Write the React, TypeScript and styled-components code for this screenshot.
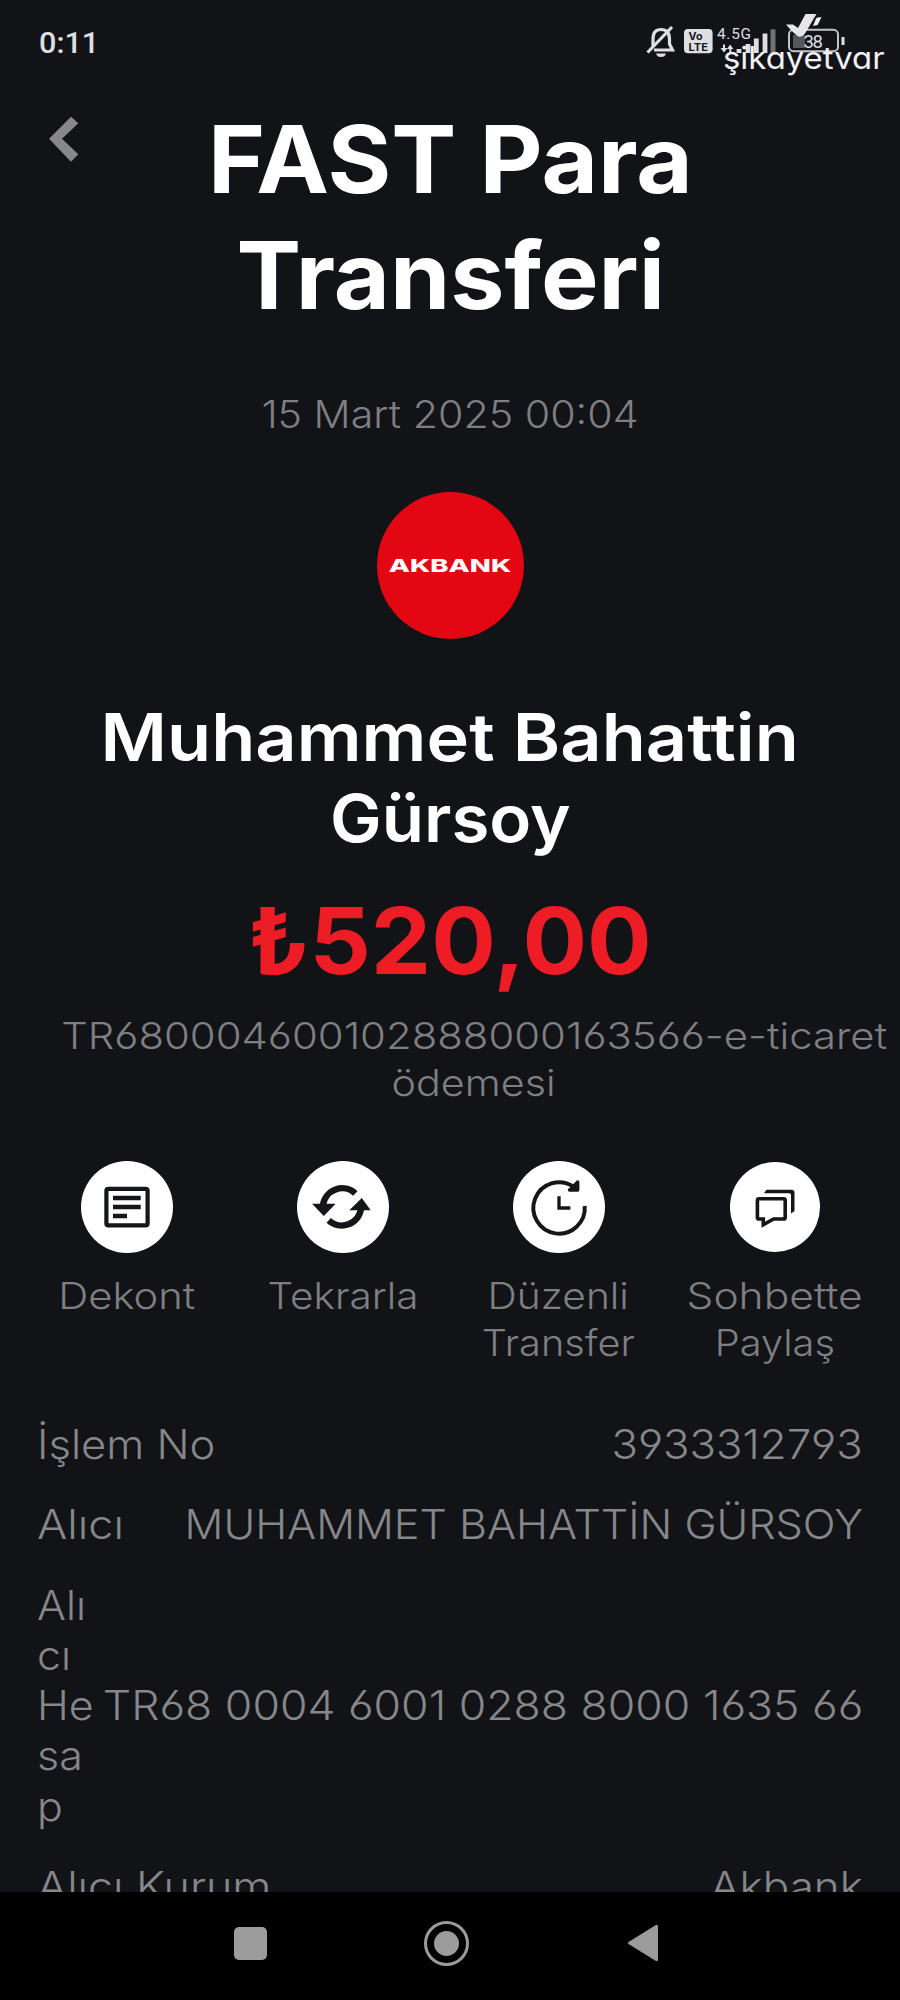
import React from 'react';
import styled, { createGlobalStyle } from 'styled-components';

const GlobalStyle = createGlobalStyle`
  * { box-sizing: border-box; }
  body { margin: 0; background: #121317; }
`;

const muted = '#7e7f83';

/* One line of text, widened from its own left, centre or right edge */
const Line = styled.span<{ $stretch?: number; $from?: 'left' | 'center' | 'right' }>`
  display: block;
  white-space: nowrap;
  transform: scaleX(${(p) => p.$stretch ?? 1});
  transform-origin: ${(p) => p.$from ?? 'center'} center;
`;

const Screen = styled.div`
  width: 900px;
  height: 2000px;
  display: flex;
  flex-direction: column;
  overflow: hidden;
  background: #121317;
  color: #fff;
  font-family: Inter, 'Liberation Sans', sans-serif;
  font-feature-settings: 'cv03', 'cv04';
`;

const StatusBar = styled.div`
  position: relative;
  flex: none;
  height: 101px;
  padding: 25px 26px 0 39px;
  display: flex;
  align-items: flex-start;
  justify-content: space-between;
  font-family: Roboto, sans-serif;
  color: #dfdfe3;
`;

const Clock = styled.div`
  font-size: 30px;
  line-height: 36px;
  font-weight: 500;
`;

const StatusIcons = styled.div`
  display: flex;
  margin-right: 27px;
`;

const Watermark = styled.div`
  position: absolute;
  left: 723px;
  top: 12px;
  width: 165px;
  color: #f2f2f4;
  font-family: Inter, sans-serif;
  font-size: 30.6px;
  font-weight: 400;
  line-height: 36px;
  font-feature-settings: 'cv11';
`;

const WatermarkMark = styled.svg`
  display: block;
  margin-left: 62px;
`;

const WatermarkName = styled.div`
  margin-top: 0;
`;

const Content = styled.main`
  flex: 1;
  min-height: 0;
  overflow: hidden;
`;

const Header = styled.header`
  display: grid;
  grid-template-columns: 110px 1fr 109px;
`;

const BackButton = styled.button`
  height: 76px;
  padding: 0 0 0 49px;
  border: 0;
  background: none;
  display: flex;
  align-items: center;
`;

const Title = styled.h1`
  margin: 0;
  display: flex;
  flex-direction: column;
  align-items: center;
  font-size: 93px;
  line-height: 116px;
  font-weight: 700;
`;

const Timestamp = styled.div`
  margin-top: 58px;
  display: flex;
  justify-content: center;
  font-size: 38px;
  line-height: 46px;
  font-weight: 330;
  color: ${muted};
`;

const BankBadge = styled.div`
  width: 147px;
  height: 147px;
  margin: 55px auto 0;
  border-radius: 50%;
  background: #e30613;
  display: flex;
  align-items: center;
  justify-content: center;
`;

const BankName = styled.span`
  font-size: 18px;
  line-height: 20px;
  font-weight: 800;
  transform: scaleX(1.53);
`;

const Recipient = styled.h2`
  margin: 58px 0 0;
  display: flex;
  flex-direction: column;
  align-items: center;
  font-size: 65.6px;
  line-height: 81px;
  font-weight: 600;
`;

const Amount = styled.div`
  margin-top: 32px;
  display: flex;
  justify-content: center;
  font-size: 92px;
  line-height: 100px;
  font-weight: 700;
  color: #ee1c25;
`;

const Note = styled.div`
  margin-top: 22px;
  padding-left: 48px;
  display: flex;
  flex-direction: column;
  align-items: center;
  font-size: 37px;
  line-height: 46.5px;
  font-weight: 330;
  color: ${muted};
`;

const Actions = styled.div`
  margin-top: 55px;
  padding: 0 17.4px 0 18.6px;
  display: grid;
  grid-template-columns: repeat(4, 216px);
`;

const Action = styled.div`
  display: flex;
  flex-direction: column;
  align-items: center;
`;

const ActionLabel = styled.div`
  margin-top: 20px;
  display: flex;
  flex-direction: column;
  align-items: center;
  font-size: 37px;
  line-height: 46.5px;
  font-weight: 330;
  color: ${muted};
`;

const Details = styled.dl`
  margin: 54px 37px 0 37px;
  display: flex;
  flex-direction: column;
  gap: 30px;
  font-size: 40.5px;
  line-height: 50.3px;
  font-weight: 330;
  color: #86878a;
`;

const DetailRow = styled.div`
  display: flex;
  align-items: center;
  justify-content: space-between;
`;

const DetailLabel = styled.dt`
  margin: 0;
`;

const DetailValue = styled.dd`
  margin: 0;
`;

const NavBar = styled.nav`
  flex: none;
  height: 108px;
  padding: 0 242px 6px 234px;
  background: #000;
  display: flex;
  align-items: center;
  justify-content: space-between;
`;

const RecentsKey = styled.div`
  width: 33px;
  height: 33px;
  border-radius: 5px;
  background: #9b9b9b;
`;

const HomeKey = styled.div`
  width: 45px;
  height: 45px;
  margin-left: -1px;
  border: 3.5px solid #9b9b9b;
  border-radius: 50%;
  display: flex;
  align-items: center;
  justify-content: center;
  &::after {
    content: '';
    width: 25px;
    height: 25px;
    border-radius: 50%;
    background: #9b9b9b;
  }
`;

const ink = '#15161a';

const ReceiptIcon = () => (
  <svg width="92" height="92" viewBox="0 0 92 92" fill="none" stroke={ink}>
    <circle cx="46" cy="46" r="46" fill="#fff" stroke="none" />
    <rect x="25.4" y="27.8" width="41.2" height="36.6" rx="2" strokeWidth="4.2" />
    <path d="M32 37h27.7M32 46h27.7M32 55h14" strokeWidth="4.6" />
  </svg>
);

const RepeatIcon = () => (
  <svg width="92" height="92" viewBox="0 0 92 92" fill="none" stroke={ink}>
    <circle cx="46" cy="46" r="46" fill="#fff" stroke="none" />
    <path d="M26 44A19.3 19.3 0 0 1 58.3 32.5M64 47.5A19.3 19.3 0 0 1 31.7 59.3" strokeWidth="6.4" />
    <path d="M15 42.7H38.7L26.8 55zM52.3 49.3H73.7L64.8 37z" fill={ink} stroke="none" />
  </svg>
);

const ScheduleIcon = () => (
  <svg width="92" height="92" viewBox="0 0 92 92" fill="none" stroke={ink}>
    <circle cx="46" cy="46" r="46" fill="#fff" stroke="none" />
    <path d="M71.7 45A25.7 25.7 0 1 1 60.5 25.7" strokeWidth="4" />
    <path d="M64.7 21V29H56.5L60.5 25.5z" fill={ink} strokeWidth="3.4" strokeLinejoin="round" />
    <path d="M46 35.3V47H57.4" strokeWidth="3.3" />
  </svg>
);

const ShareChatIcon = () => (
  <svg width="92" height="92" viewBox="-1 -1 92 92" fill="none" stroke={ink}>
    <circle cx="45" cy="45" r="45" fill="#fff" stroke="none" />
    <path d="M29 36.8H53.6Q55.2 36.8 55.2 38.4V55.4Q55.2 57 53.6 57H43.5L33.3 62.7V57H29Q27.4 57 27.4 55.4V38.4Q27.4 36.8 29 36.8z" strokeWidth="3.6" />
    <path d="M34 31.3L36.5 27.7H61.5Q64.5 27.7 64.5 30.7V49L61 51.5V33Q61 31.3 59.3 31.3z" fill={ink} stroke="none" />
  </svg>
);

/* Muted bell, VoLTE badge, network type with signal bars, battery */
const StatusGlyphs = () => (
  <svg width="202" height="40" viewBox="645 25 202 40" fill="none">
    <g stroke="#dfdfe3" strokeWidth="3.2">
      <path d="M653 46V39Q653 29.5 661 29.5Q669.5 29.5 669.5 39V44L672.5 50H654" />
      <path d="M647.5 52.5L672 27" />
    </g>
    <path d="M656 53.5H666Q665 57 661 57T656 53.5z" fill="#dfdfe3" />
    <rect x="684" y="29" width="28.6" height="24.3" rx="4" fill="#dfdfe3" />
    <g fill="#18191d" fontFamily="Inter, sans-serif" fontWeight="700" fontSize="10.5">
      <text x="688.5" y="39.6" textLength="14" lengthAdjust="spacingAndGlyphs">Vo</text>
      <text x="688.5" y="50.7" textLength="19.5" lengthAdjust="spacingAndGlyphs">LTE</text>
    </g>
    <text x="717" y="39" textLength="34" fill="#dfdfe3" fontFamily="Roboto, sans-serif" fontSize="15.4">4.5G</text>
    <path d="M720.5 48L724 52.5L727.5 48zM727 49L730 44.5L733.5 49z" fill="#dfdfe3" />
    <path d="M724 44.5V49M730.3 48V53" stroke="#dfdfe3" strokeWidth="2" />
    <path d="M739 49V53M748 44V53M756.3 38.5V53M765 33.5V53" stroke="#dfdfe3" strokeWidth="4.8" />
    <path d="M773 29.3V53" stroke="#6f7074" strokeWidth="5" />
    <rect x="793" y="35" width="12" height="13" fill="#55565a" />
    <rect x="789" y="29.8" width="49" height="21.4" rx="4.5" stroke="#c4c4c8" strokeWidth="2" />
    <path d="M843 37V45" stroke="#dfdfe3" strokeWidth="3" />
    <text x="803.5" y="48" textLength="19.5" fill="#dfdfe3" fontFamily="Roboto, sans-serif" fontSize="18.5">38</text>
  </svg>
);

const actions = [
  { icon: <ReceiptIcon />, lines: [{ text: 'Dekont', stretch: 1.127 }] },
  { icon: <RepeatIcon />, lines: [{ text: 'Tekrarla', stretch: 1.095 }] },
  { icon: <ScheduleIcon />, lines: [{ text: 'Düzenli', stretch: 1.1 }, { text: 'Transfer', stretch: 1.072 }] },
  { icon: <ShareChatIcon />, lines: [{ text: 'Sohbette', stretch: 1.15 }, { text: 'Paylaş', stretch: 1.075 }] },
];

const details = [
  { label: ['İşlem No'], value: '3933312793', labelStretch: 1.075, valueStretch: 1.08 },
  { label: ['Alıcı'], value: 'MUHAMMET BAHATTİN GÜRSOY', labelStretch: 1.11, valueStretch: 1.065 },
  { label: ['Alı', 'cı', 'He', 'sa', 'p'], value: 'TR68 0004 6001 0288 8000 1635 66', labelStretch: 1.06, valueStretch: 1.1 },
  { label: ['Alıcı Kurum'], value: 'Akbank', labelStretch: 1.105, valueStretch: 1.085 },
];

export default function App() {
  return (
    <>
      <GlobalStyle />
      <Screen>
        <StatusBar>
          <Clock><Line $stretch={1.02} $from="left">0:11</Line></Clock>
          <StatusIcons><StatusGlyphs /></StatusIcons>
          <Watermark>
            <WatermarkMark width="38" height="28" viewBox="785 12 38 28">
              <path d="M786 24.5H793L798 28L805.5 14H816.5L805 33.5Q802 37.5 798.5 36.5Q794 34 786 24.5z" fill="#e6e6e8" />
              <path d="M813 26L816 18.5Q817 17 821.5 17.3L817.5 25z" fill="#f2f2f4" />
            </WatermarkMark>
            <WatermarkName><Line $stretch={1.075} $from="left">şikayetvar</Line></WatermarkName>
          </Watermark>
        </StatusBar>
        <Content>
          <Header>
            <BackButton aria-label="Geri">
              <svg width="30" height="46" viewBox="49 116 30 46">
                <path d="M71 116.7L78.3 123.3L62 138.7L78.3 154.3L71 161.7L49 138.7z" fill="#88888b" />
              </svg>
            </BackButton>
            <Title>
              <Line $stretch={1.048}>FAST Para</Line>
              <Line $stretch={1.041}>Transferi</Line>
            </Title>
          </Header>
          <Timestamp><Line $stretch={1.084}>15 Mart 2025 00:04</Line></Timestamp>
          <BankBadge><BankName>AKBANK</BankName></BankBadge>
          <Recipient>
            <Line $stretch={1.099}>Muhammet Bahattin</Line>
            <Line $stretch={1.053}>Gürsoy</Line>
          </Recipient>
          <Amount><Line $stretch={1.043}>₺520,00</Line></Amount>
          <Note>
            <Line $stretch={1.131}>TR680004600102888000163566-e-ticaret</Line>
            <Line $stretch={1.115}>ödemesi</Line>
          </Note>
          <Actions>
            {actions.map((a) => (
              <Action key={a.lines[0].text}>
                {a.icon}
                <ActionLabel>
                  {a.lines.map((l) => <Line key={l.text} $stretch={l.stretch}>{l.text}</Line>)}
                </ActionLabel>
              </Action>
            ))}
          </Actions>
          <Details>
            {details.map((d) => (
              <DetailRow key={d.value}>
                <DetailLabel>
                  {d.label.map((t) => <Line key={t} $stretch={d.labelStretch} $from="left">{t}</Line>)}
                </DetailLabel>
                <DetailValue><Line $stretch={d.valueStretch} $from="right">{d.value}</Line></DetailValue>
              </DetailRow>
            ))}
          </Details>
        </Content>
        <NavBar>
          <RecentsKey />
          <HomeKey />
          <svg width="31" height="38" viewBox="0 0 31 38">
            <path d="M1.5 18L28.5 1.2Q31 0 31 2.5V35.5Q31 38 28.5 36.8L1.5 20Q0 19 1.5 18z" fill="#9b9b9b" />
          </svg>
        </NavBar>
      </Screen>
    </>
  );
}
